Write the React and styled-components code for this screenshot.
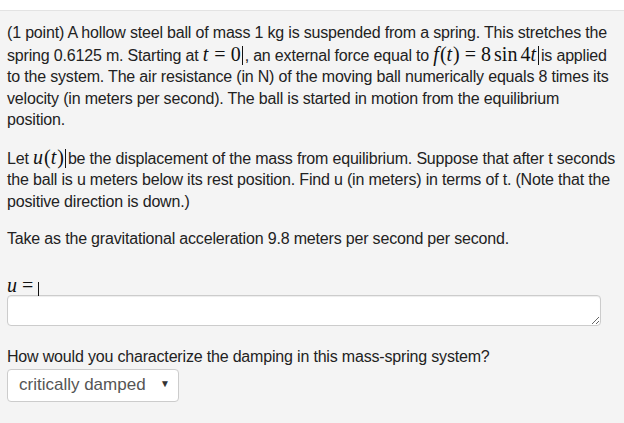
import React from 'react';
import styled, { createGlobalStyle } from 'styled-components';

const GlobalStyle = createGlobalStyle`
  html, body {
    margin: 0;
    padding: 0;
    background: #fff;
  }
  body {
    font-family: 'Liberation Sans', Arial, sans-serif;
  }
`;

const Page = styled.div`
  padding-top: 10px;
  width: 624px;
  height: 423px;
  box-sizing: border-box;
  overflow: hidden;
`;

const Panel = styled.div`
  background: #f4f4f4;
  border-top: 1px solid #e3e3e3;
  height: 100%;
  box-sizing: border-box;
  padding: 11px 4px 0 7px;
  color: #222;
  font-size: 16px;
  line-height: 21.5px;
`;

const Para = styled.p`
  margin: 0 0 16px 0;
  letter-spacing: -0.18px;
`;

const Math = styled.span`
  font-family: 'Liberation Serif', 'Times New Roman', serif;
  font-size: 20px;
  line-height: 1;
  letter-spacing: 0;
  color: #111;
  white-space: nowrap;
`;

const Var = styled.i`
  font-style: italic;
  padding-right: 1px;
`;

const Op = styled.span`
  margin: 0 ${p => p.$space || '5px'};
`;

const Cursor = styled.span`
  display: inline-block;
  width: 0;
  height: ${p => p.$h || '19px'};
  border-left: 1px solid #111;
  vertical-align: -4px;
  margin: 0 2px 0 1px;
`;

const AnswerLabel = styled.div`
  margin-top: 25px;
  line-height: 18px;
`;

const AnswerBox = styled.textarea`
  display: block;
  width: 594px;
  height: 31px;
  box-sizing: border-box;
  margin-top: -1px;
  border: 1px solid #ccc;
  border-radius: 4px;
  background: #fff;
  box-shadow: inset 0 1px 1px rgba(0, 0, 0, 0.075);
  resize: vertical;
  font-family: inherit;
`;

const Question = styled.div`
  margin-top: 21px;
  line-height: 20px;
  letter-spacing: -0.18px;
`;

const Select = styled.div`
  display: inline-flex;
  align-items: center;
  justify-content: space-between;
  width: 172px;
  height: 33px;
  box-sizing: border-box;
  margin-top: 2px;
  padding: 0 8px 0 11px;
  border: 1px solid #ccc;
  border-radius: 4px;
  background: #fff;
  color: #555;
  font-size: 17px;
`;

const Caret = styled.span`
  font-size: 10px;
  color: #333;
  margin-top: -3px;
`;

export default function App() {
  return (
    <>
      <GlobalStyle />
      <Page>
        <Panel>
          <Para>
            (1 point) A hollow steel ball of mass 1 kg is suspended from a spring. This stretches the
            spring 0.6125 m. Starting at{' '}
            <Math>
              <Var>t</Var>
              <Op>=</Op>0
            </Math>
            <Cursor />, an external force equal to{' '}
            <Math>
              <Var>f</Var>(<Var>t</Var>)<Op>=</Op>8<Op $space="3px">sin</Op>4<Var>t</Var>
            </Math>
            <Cursor />is applied to the system. The air resistance (in N) of the moving ball numerically
            equals 8 times its velocity (in meters per second). The ball is started in motion from the
            equilibrium position.
          </Para>
          <Para>
            Let{' '}
            <Math>
              <Var>u</Var>(<Var>t</Var>)
            </Math>
            <Cursor />be the displacement of the mass from equilibrium. Suppose that after t seconds the
            ball is u meters below its rest position. Find u (in meters) in terms of t. (Note that the
            positive direction is down.)
          </Para>
          <Para>Take as the gravitational acceleration 9.8 meters per second per second.</Para>
          <AnswerLabel>
            <Math>
              <Var>u</Var>
              <Op $space="4px">=</Op>
            </Math>
            <Cursor $h="14px" />
          </AnswerLabel>
          <AnswerBox />
          <Question>How would you characterize the damping in this mass-spring system?</Question>
          <Select>
            critically damped
            <Caret>▼</Caret>
          </Select>
        </Panel>
      </Page>
    </>
  );
}
